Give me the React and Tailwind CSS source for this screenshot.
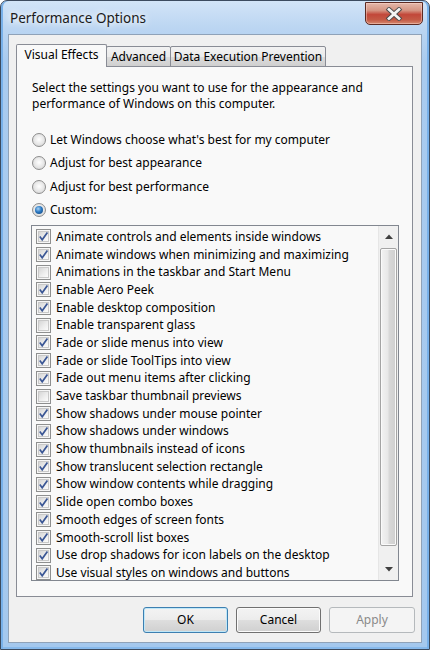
import React from 'react';

const items = [
  ['Animate controls and elements inside windows', true],
  ['Animate windows when minimizing and maximizing', true],
  ['Animations in the taskbar and Start Menu', false],
  ['Enable Aero Peek', true],
  ['Enable desktop composition', true],
  ['Enable transparent glass', false],
  ['Fade or slide menus into view', true],
  ['Fade or slide ToolTips into view', true],
  ['Fade out menu items after clicking', true],
  ['Save taskbar thumbnail previews', false],
  ['Show shadows under mouse pointer', true],
  ['Show shadows under windows', true],
  ['Show thumbnails instead of icons', true],
  ['Show translucent selection rectangle', true],
  ['Show window contents while dragging', true],
  ['Slide open combo boxes', true],
  ['Smooth edges of screen fonts', true],
  ['Smooth-scroll list boxes', true],
  ['Use drop shadows for icon labels on the desktop', true],
  ['Use visual styles on windows and buttons', true],
];

const radios = [
  ["Let Windows choose what's best for my computer", false],
  ['Adjust for best appearance', false],
  ['Adjust for best performance', false],
  ['Custom:', true],
];

const Radio = ({ checked }) => (
  <span className="w-[14px] h-[14px] rounded-full border border-[#8d8d8d] bg-[radial-gradient(circle_at_50%_45%,#ffffff_0%,#e6e6e6_55%,#cbcbcb_100%)] flex items-center justify-center shrink-0">
    {checked && (
      <span className="w-[8px] h-[8px] rounded-full bg-[radial-gradient(circle_at_40%_35%,#a9d3f5_0%,#2b79c2_45%,#0e3e74_100%)]" />
    )}
  </span>
);

const Checkbox = ({ checked }) => (
  <span className="relative w-[15px] h-[15px] border border-[#8e8f8f] bg-[#f6f6f6] p-[1px] shrink-0">
    <span className="block w-full h-full border border-[#c9c9c9] bg-[linear-gradient(135deg,#d6d6d6_0%,#ededed_55%,#fbfbfb_100%)]" />
    {checked && (
      <svg className="absolute inset-0" width="13" height="13" viewBox="0 0 13 13">
        <path d="M2.8 6.6 L5.2 9.8 L10.4 2.4" stroke="#3b5795" strokeWidth="1.7" fill="none" />
      </svg>
    )}
  </span>
);

const Arrow = ({ up }) => (
  <svg width="8" height="5" viewBox="0 0 8 5">
    <path d={up ? 'M0 5 L4 0.5 L8 5 Z' : 'M0 0 L8 0 L4 4.5 Z'} fill="#3f3f3f" />
  </svg>
);

const Button = ({ children, kind }) => {
  if (kind === 'disabled') {
    return (
      <div className="w-[86px] h-[26px] rounded-[3px] border border-[#b5b9bc] bg-[#f4f4f4] flex items-center justify-center text-[#8a8a8a]">
        {children}
      </div>
    );
  }
  return (
    <div
      className={
        kind === 'default'
          ? 'w-[85px] h-[26px] rounded-[3px] border border-[#3c7fb1] bg-[linear-gradient(180deg,#f3f3f3_0%,#ececec_50%,#dedede_50%,#d0d0d0_100%)] shadow-[inset_0_0_0_1px_#bfe7f8] flex items-center justify-center text-black'
          : 'w-[85px] h-[26px] rounded-[3px] border border-[#707070] bg-[linear-gradient(180deg,#f3f3f3_0%,#ececec_50%,#dedede_50%,#d0d0d0_100%)] shadow-[inset_0_0_0_1px_#fbfbfb] flex items-center justify-center text-black'
      }
    >
      {children}
    </div>
  );
};

export default function App() {
  return (
    <div className="w-[430px] h-[650px] bg-white font-['Noto_Sans',sans-serif] text-[12px] text-black">
      <div className="relative h-full rounded-t-[7px] border border-[#3c4b5f] bg-[linear-gradient(180deg,#d2e4f7_0px,#bcd6f2_26px,#a9cbef_60px,#a4c8ee_100%)] shadow-[inset_2px_0_0_#78b1ea,inset_-2px_0_0_#78b1ea,inset_0_-2px_0_#86b9ec] flex flex-col px-[7px] pb-[6px]">
        <div className="h-[33px] pl-[2px] pt-[8px] text-[13.5px] leading-[18px] text-[#1b1b1b] [text-shadow:0_0_6px_#ffffff,0_0_10px_#ffffff]">
          Performance Options
        </div>

        <div className="absolute right-[6px] top-[1px] w-[58px] h-[23px] rounded-b-[5px] border border-[#5c2a22] bg-[linear-gradient(180deg,#e4b8aa_0%,#d59583_35%,#c2483a_55%,#c45a45_80%,#d58a70_100%)] shadow-[inset_0_0_0_1px_rgba(255,220,210,0.45)] flex items-center justify-center">
          <svg width="18" height="14" viewBox="0 0 18 14">
            <path d="M4 2.5 L14 11.5 M14 2.5 L4 11.5" stroke="#4a4a4a" strokeWidth="4.6" strokeLinecap="square" />
            <path d="M4 2.5 L14 11.5 M14 2.5 L4 11.5" stroke="#f4f4f4" strokeWidth="2.8" strokeLinecap="square" />
          </svg>
        </div>

        <div className="flex-1 bg-[#f0f0f0] border border-[#8fa2b8] flex flex-col pl-[7px] pr-[6px] pt-[9px] pb-[9px]">
          <div className="relative z-10 flex items-end h-[23px] -mb-px">
            <div className="w-[91px] h-[23px] rounded-t-[2px] border border-b-0 border-[#898c95] bg-[#f9f9f9] flex items-center justify-center pb-[2px]">
              Visual Effects
            </div>
            <div className="-ml-px w-[65px] h-[21px] rounded-t-[2px] border border-[#898c95] bg-[linear-gradient(180deg,#f2f2f2_0%,#ebebeb_50%,#dddddd_50%,#cfcfcf_100%)] flex items-center justify-center">
              Advanced
            </div>
            <div className="-ml-px w-[156px] h-[21px] rounded-t-[2px] border border-[#898c95] bg-[linear-gradient(180deg,#f2f2f2_0%,#ebebeb_50%,#dddddd_50%,#cfcfcf_100%)] flex items-center justify-center">
              Data Execution Prevention
            </div>
          </div>

          <div className="h-[531px] mr-[2px] border border-[#898c95] bg-[#f9f9f9] flex flex-col pl-[14px] pr-[13px] pt-[13px]">
            <p className="pl-[1px] leading-[16px]">
              Select the settings you want to use for the appearance and
              <br />
              performance of Windows on this computer.
            </p>
            <div className="mt-[16px] flex flex-col">
              {radios.map(([label, on]) => (
                <div key={label} className="h-[23.5px] flex items-center gap-[4px] pl-[1px]">
                  <Radio checked={on} />
                  <span>{label}</span>
                </div>
              ))}
            </div>
            <div className="mt-[3px] h-[356px] border border-[#828790] bg-[#f9f9f9] flex">
              <div className="flex-1 pt-[2px] overflow-hidden">
                {items.map(([label, on]) => (
                  <div key={label} className="h-[17.7px] flex items-center gap-[5px] pl-[4px] whitespace-nowrap">
                    <Checkbox checked={on} />
                    <span>{label}</span>
                  </div>
                ))}
              </div>
              <div className="w-[20px] bg-[#f0f0f0] border-l border-[#e6e6e6] flex flex-col">
                <div className="h-[21px] flex items-center justify-center">
                  <Arrow up />
                </div>
                <div className="flex-1 px-[1px] py-[1px]">
                  <div className="h-[298px] rounded-[2px] border border-[#a4a4a4] bg-[linear-gradient(90deg,#f3f3f3_0%,#e8e8e8_45%,#d8d8d8_55%,#cfcfcf_100%)] shadow-[inset_0_0_0_1px_#fafafa]" />
                </div>
                <div className="h-[21px] flex items-center justify-center">
                  <Arrow />
                </div>
              </div>
            </div>
          </div>

          <div className="mt-[10px] flex justify-end gap-[8px]">
            <Button kind="default">OK</Button>
            <Button>Cancel</Button>
            <Button kind="disabled">Apply</Button>
          </div>
        </div>
      </div>
    </div>
  );
}
